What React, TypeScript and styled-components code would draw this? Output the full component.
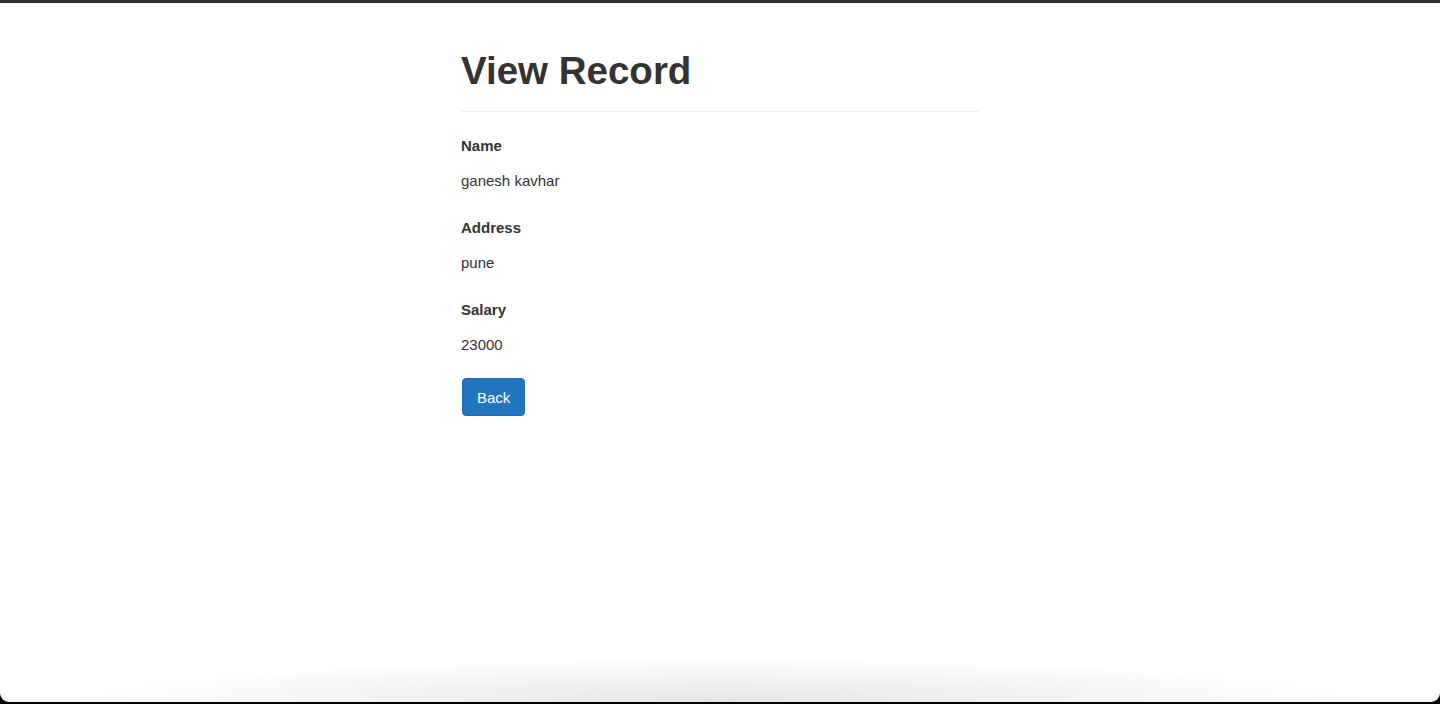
import styled, { createGlobalStyle } from "styled-components";

const GlobalStyle = createGlobalStyle`
  html, body {
    margin: 0;
    padding: 0;
    background: #000;
  }
  * {
    box-sizing: border-box;
  }
`;

const Window = styled.div`
  position: relative;
  height: 702px;
  background: #fff;
  border-top: 3px solid #2f2f32;
  border-radius: 0 0 9px 9px;
  overflow: hidden;
  font-family: "Liberation Sans", Arial, sans-serif;
  color: #333;
`;

const BottomShade = styled.div`
  position: absolute;
  left: 60px;
  right: 60px;
  bottom: 0;
  height: 44px;
  pointer-events: none;
  background: radial-gradient(
    ellipse 50% 100% at 50% 100%,
    rgba(0, 0, 0, 0.1) 0%,
    rgba(0, 0, 0, 0.06) 45%,
    rgba(0, 0, 0, 0) 100%
  );
`;

const Wrapper = styled.main`
  width: 518px;
  margin: 0 auto;
  padding-top: 46px;
`;

const PageHeader = styled.div`
  padding-bottom: 19px;
  border-bottom: 1px solid #eee;
  margin-bottom: 23px;
`;

const Title = styled.h1`
  margin: 0;
  font-size: 38.5px;
  line-height: 43px;
  font-weight: 700;
  color: #333;
`;

const Fields = styled.div`
  display: flex;
  flex-direction: column;
  gap: 19px;
`;

const Group = styled.div`
  display: flex;
  flex-direction: column;
`;

const Label = styled.label`
  display: block;
  font-size: 15px;
  line-height: 21px;
  font-weight: 700;
  margin-bottom: 5px;
`;

const Value = styled.p`
  margin: 0;
  padding: 8.5px 0 7.5px;
  font-size: 15px;
  line-height: 21px;
`;

const Actions = styled.div`
  margin-top: 16px;
`;

const Button = styled.a`
  display: inline-block;
  margin-left: 1px;
  padding: 7.5px 14px;
  font-size: 15px;
  line-height: 21px;
  color: #fff;
  background: #2276c0;
  border: 1px solid #1d6aad;
  border-radius: 4px;
  text-decoration: none;
  cursor: pointer;
`;

const record = [
  { label: "Name", value: "ganesh kavhar" },
  { label: "Address", value: "pune" },
  { label: "Salary", value: "23000" },
];

const App = () => {
  return (
    <>
      <GlobalStyle />
      <Window>
        <Wrapper>
          <PageHeader>
            <Title>View Record</Title>
          </PageHeader>
          <Fields>
            {record.map((field) => (
              <Group key={field.label}>
                <Label>{field.label}</Label>
                <Value>{field.value}</Value>
              </Group>
            ))}
          </Fields>
          <Actions>
            <Button href="#">Back</Button>
          </Actions>
        </Wrapper>
        <BottomShade />
      </Window>
    </>
  );
};

export default App;
